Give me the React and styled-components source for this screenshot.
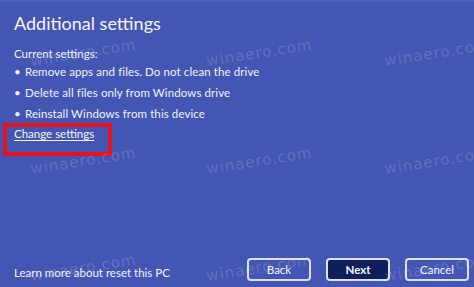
import styled, { createGlobalStyle } from 'styled-components'

const GlobalStyle = createGlobalStyle`
  html, body {
    margin: 0;
    padding: 0;
    background: #4456b4;
  }
  body {
    font-family: Lato, "Noto Sans", sans-serif;
    color: #f2f3fb;
  }
`

const Page = styled.div`
  position: relative;
  width: 474px;
  height: 287px;
  overflow: hidden;
  background: #4456b4;
  border-top: 2px solid #4d5fbc;
  box-sizing: border-box;
  display: flex;
  flex-direction: column;
  justify-content: space-between;
`

const Content = styled.div`
  padding: 9px 0 0 14px;
  display: flex;
  flex-direction: column;
`

const Title = styled.h1`
  margin: 0 0 11px;
  font-size: 18px;
  font-weight: 400;
  line-height: 24px;
  color: #f4f5fb;
`

const Label = styled.p`
  margin: 0 0 2px;
  font-size: 11.5px;
  line-height: 16px;
`

const List = styled.ul`
  margin: 0;
  padding: 0;
  list-style: none;
  display: flex;
  flex-direction: column;
  gap: 5px;
`

const Item = styled.li`
  font-size: 11.5px;
  line-height: 16px;
  letter-spacing: 0.1px;
  display: flex;
  gap: 6px;
  &::before {
    content: '•';
    width: 5px;
  }
`

const Highlight = styled.div`
  align-self: flex-start;
  margin: 1px 0 0 -11px;
  padding: 0 14px 11px 7px;
  border: 4px solid #e8121c;
`

const Link = styled.a`
  display: block;
  font-size: 11.5px;
  line-height: 14px;
  color: #f4f5fb;
  text-decoration: underline;
  text-underline-offset: 2px;
`

const Footer = styled.div`
  display: flex;
  align-items: center;
  justify-content: space-between;
  padding: 0 5px 6px 14px;
`

const FooterText = styled.span`
  font-size: 11.5px;
  line-height: 16px;
  padding-top: 6px;
`

const Buttons = styled.div`
  display: flex;
  gap: 15px;
`

const Button = styled.button`
  flex-shrink: 0;
  width: 64px;
  height: 23px;
  box-sizing: border-box;
  border: 2px solid #dde1f5;
  border-radius: 4px;
  background: ${({ $primary }) => ($primary ? '#0f1f5c' : 'transparent')};
  color: #f4f5fb;
  font-family: inherit;
  font-size: 11.5px;
  font-weight: ${({ $primary }) => ($primary ? 700 : 400)};
  padding: 0;
`

const Watermark = styled.span`
  position: absolute;
  left: ${({ $x }) => $x}px;
  top: ${({ $y }) => $y}px;
  font-family: "DejaVu Sans", sans-serif;
  font-size: 15px;
  letter-spacing: 1px;
  color: rgba(255, 255, 255, 0.17);
  transform: rotate(-9deg);
  transform-origin: left bottom;
  white-space: nowrap;
  pointer-events: none;
`

const marks = []
for (const y of [50, 158, 265]) {
  for (const x of [32, 208, 386]) marks.push({ x, y })
}

export default function App() {
  return (
    <Page>
      <GlobalStyle />
      <Content>
        <Title>Additional settings</Title>
        <Label>Current settings:</Label>
        <List>
          <Item>Remove apps and files. Do not clean the drive</Item>
          <Item>Delete all files only from Windows drive</Item>
          <Item>Reinstall Windows from this device</Item>
        </List>
        <Highlight>
          <Link>Change settings</Link>
        </Highlight>
      </Content>
      <Footer>
        <FooterText>Learn more about reset this PC</FooterText>
        <Buttons>
          <Button>Back</Button>
          <Button $primary>Next</Button>
          <Button>Cancel</Button>
        </Buttons>
      </Footer>
      {marks.map((m, i) => (
        <Watermark key={i} $x={m.x} $y={m.y}>winaero.com</Watermark>
      ))}
    </Page>
  )
}
